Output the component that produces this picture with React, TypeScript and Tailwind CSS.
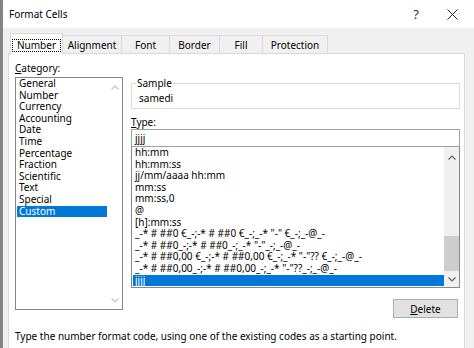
import { ReactNode } from "react";

const categories = [
  "General",
  "Number",
  "Currency",
  "Accounting",
  "Date",
  "Time",
  "Percentage",
  "Fraction",
  "Scientific",
  "Text",
  "Special",
  "Custom",
];

const formats = [
  "hh:mm",
  "hh:mm:ss",
  "jj/mm/aaaa hh:mm",
  "mm:ss",
  "mm:ss,0",
  "@",
  "[h]:mm:ss",
  '_-* # ##0 €_-;-* # ##0 €_-;_-* "-" €_-;_-@_-',
  '_-* # ##0_-;-* # ##0_-;_-* "-"_-;_-@_-',
  '_-* # ##0,00 €_-;-* # ##0,00 €_-;_-* "-"?? €_-;_-@_-',
  '_-* # ##0,00_-;-* # ##0,00_-;_-* "-"??_-;_-@_-',
  "jjjj",
];

const tabs = [
  { label: "Alignment", w: "w-[59px]" },
  { label: "Font", w: "w-[48px]" },
  { label: "Border", w: "w-[50px]" },
  { label: "Fill", w: "w-[43px]" },
  { label: "Protection", w: "w-[65px]" },
];

function Chevron({ up, color }: { up?: boolean; color: string }) {
  return (
    <svg width="8" height="5" viewBox="0 0 8 5" fill="none">
      <path
        d={up ? "M0.5 4.5 L4 1 L7.5 4.5" : "M0.5 0.5 L4 4 L7.5 0.5"}
        stroke={color}
        strokeWidth="1.2"
      />
    </svg>
  );
}

function Row({ children, selected }: { children: ReactNode; selected?: boolean }) {
  return (
    <div
      className={`h-[11.6px] whitespace-nowrap pl-[2px] leading-[11.6px] ${
        selected ? "bg-[#0078d7] text-white" : "text-black"
      }`}
    >
      {children}
    </div>
  );
}

export default function App() {
  return (
    <div className="flex h-[348px] w-[474px] flex-col overflow-hidden border-l-[3px] border-[#858585] bg-[#f0f0f0] font-['Noto_Sans',sans-serif] text-[10px] text-black">
      {/* title bar */}
      <div className="flex h-[28px] flex-none items-center bg-white pl-[6px]">
        <span className="text-[10px]">Format Cells</span>
        <span className="ml-auto mr-[28px] text-[13px] leading-none text-[#333]">?</span>
        <svg width="11" height="11" viewBox="0 0 11 11" className="mr-[16px]">
          <path d="M0.5 0.5 L10.5 10.5 M10.5 0.5 L0.5 10.5" stroke="#222" strokeWidth="1" />
        </svg>
      </div>

      <div className="flex flex-1 flex-col pl-[5px] pr-[9px]">
        {/* tabs */}
        <div className="flex h-[25px] flex-none items-end pl-[2px]">
          <div className="relative z-10 -mb-[1px] flex h-[21px] w-[53px] items-start justify-center border-x border-t border-[#d9d9d9] bg-white pt-[5px]">
            <span className="border border-dotted border-black px-[4px] leading-[11px]">Number</span>
          </div>
          {tabs.map((t) => (
            <div
              key={t.label}
              className={`flex h-[18px] ${t.w} items-center justify-center border-r border-t border-[#d9d9d9] bg-[#f0f0f0] pt-[2px]`}
            >
              {t.label}
            </div>
          ))}
        </div>

        {/* tab page */}
        <div className="flex flex-1 flex-col border border-b-0 border-[#d9d9d9] bg-white pl-[6px] pr-[4px]">
          <div className="flex items-start gap-[8px]">
            {/* category */}
            <div className="flex w-[108px] flex-col">
              <div className="mt-[7px] leading-[14px]">
                <u className="underline-offset-[1px]">C</u>ategory:
              </div>
              <div className="mt-[2px] flex h-[233px] border border-[#828790] bg-white">
                <div className="flex-1 px-[1px]">
                  {categories.map((c) => (
                    <Row key={c} selected={c === "Custom"}>
                      {c}
                    </Row>
                  ))}
                </div>
                <div className="flex w-[14px] flex-col justify-between">
                  <div className="flex h-[18px] items-center justify-center">
                    <Chevron up color="#c4c4c4" />
                  </div>
                  <div className="flex h-[18px] items-center justify-center">
                    <Chevron color="#c4c4c4" />
                  </div>
                </div>
              </div>
            </div>

            {/* sample / type */}
            <div className="flex w-[329px] flex-col">
              <fieldset className="mt-[23px] h-[32px] border border-[#dcdcdc]">
                <legend className="ml-[4px] px-[1px] leading-[12px]">Sample</legend>
                <div className="mt-[2px] pl-[7px] leading-[14px]">samedi</div>
              </fieldset>
              <div className="mt-[6px] leading-[14px]">
                <u className="underline-offset-[1px]">T</u>ype:
              </div>
              <div className="flex h-[18px] items-center border border-[#a0a0a0] pl-[3px]">jjjj</div>
              <div className="flex h-[141px] border border-t-0 border-[#828790] bg-white">
                <div className="flex-1 overflow-hidden pl-[1px]">
                  {formats.map((f) => (
                    <Row key={f} selected={f === "jjjj"}>
                      {f}
                    </Row>
                  ))}
                </div>
                <div className="flex w-[15px] flex-col bg-[#f0f0f0]">
                  <div className="flex h-[20px] items-center justify-center">
                    <Chevron up color="#606060" />
                  </div>
                  <div className="flex-1" />
                  <div className="h-[35px] bg-[#cdcdcd]" />
                  <div className="flex h-[16px] items-center justify-center">
                    <Chevron color="#606060" />
                  </div>
                </div>
              </div>
              <button className="mr-[2px] mt-[11px] h-[19px] w-[65px] self-end border border-[#adadad] bg-[#e1e1e1] leading-[14px]">
                <u className="underline-offset-[1px]">D</u>elete
              </button>
            </div>
          </div>

          <div className="mt-[11px] leading-[14px]">
            Type the number format code, using one of the existing codes as a starting point.
          </div>
        </div>
      </div>
    </div>
  );
}
